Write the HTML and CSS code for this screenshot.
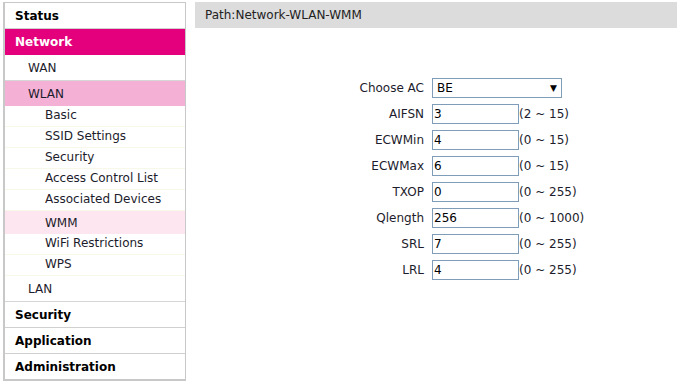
FILE: index.html
```html
<!DOCTYPE html>
<html>
<head>
<meta charset="utf-8">
<link rel="stylesheet" href="styles.css">
</head>
<body>
<div class="page">
  <nav class="menu">
    <div class="top">Status</div>
    <div class="top active">Network</div>
    <div class="mid">WAN</div>
    <div class="mid open">WLAN</div>
    <div class="sub">Basic</div>
    <div class="sub">SSID Settings</div>
    <div class="sub">Security</div>
    <div class="sub">Access Control List</div>
    <div class="sub">Associated Devices</div>
    <div class="sub current">WMM</div>
    <div class="sub">WiFi Restrictions</div>
    <div class="sub">WPS</div>
    <div class="mid last">LAN</div>
    <div class="top">Security</div>
    <div class="top">Application</div>
    <div class="top">Administration</div>
  </nav>
  <main class="content">
    <div class="path">Path:Network-WLAN-WMM</div>
    <form class="form">
      <label class="lbl">Choose AC</label>
      <div class="select"><span>BE</span><span class="arrow">&#9660;</span></div>
      <span></span>

      <label class="lbl">AIFSN</label>
      <input class="field" value="3">
      <span class="range">(2 ~ 15)</span>

      <label class="lbl">ECWMin</label>
      <input class="field" value="4">
      <span class="range">(0 ~ 15)</span>

      <label class="lbl">ECWMax</label>
      <input class="field" value="6">
      <span class="range">(0 ~ 15)</span>

      <label class="lbl">TXOP</label>
      <input class="field" value="0">
      <span class="range">(0 ~ 255)</span>

      <label class="lbl">Qlength</label>
      <input class="field" value="256">
      <span class="range">(0 ~ 1000)</span>

      <label class="lbl">SRL</label>
      <input class="field" value="7">
      <span class="range">(0 ~ 255)</span>

      <label class="lbl">LRL</label>
      <input class="field" value="4">
      <span class="range">(0 ~ 255)</span>
    </form>
  </main>
</div>
</body>
</html>
```
FILE: styles.css
```css
* { box-sizing: border-box; }
html, body { margin: 0; padding: 0; background: #fff; }
body {
  font-family: "DejaVu Sans", Verdana, sans-serif;
  font-size: 11px;
  color: #1c1c2c;
}
.page {
  display: flex;
  align-items: flex-start;
  padding: 2px 1px 0 3px;
  gap: 9px;
}
.menu {
  width: 183px;
  flex: none;
  border: 1px solid #c8c8c8;
  border-bottom: 2px solid #c8c8c8;
  border-left-width: 2px;
  display: flex;
  flex-direction: column;
}
.top {
  height: 26px;
  line-height: 25px;
  padding-top: 1px;
  padding-left: 10px;
  font-weight: bold;
  font-size: 12px;
  color: #000;
  border-bottom: 1px solid #d0d0d0;
}
.menu .top:last-child { border-bottom: none; height: 25px; line-height: 24px; }
.top.active {
  background: #e4007d;
  color: #fff;
  border-bottom: none;
  height: 26px;
}
.mid {
  height: 26px;
  line-height: 25px;
  padding-top: 1px;
  padding-left: 23px;
  font-size: 12px;
  border-bottom: 1px solid #d6d6d6;
}
.mid.open { background: #f5b0d5; border-bottom: none; height: 25px; line-height: 24px; }
.sub {
  height: 21px;
  line-height: 19px;
  padding-bottom: 1px;
  padding-left: 40px;
  font-size: 12px;
  border-bottom: 1px solid #f8f8ea;
}
.sub.current { background: #fde6f0; height: 23px; line-height: 24px; padding-bottom: 0; border-bottom: none; }
.content { flex: 1; }
.path {
  background: #dcdcdc;
  height: 26px;
  line-height: 26px;
  padding-left: 10px;
  font-size: 12px;
  color: #222;
}
.form {
  display: grid;
  grid-template-columns: 229px 87px auto;
  column-gap: 8px;
  row-gap: 6px;
  align-items: center;
  margin-top: 50px;
}
.lbl { text-align: right; font-size: 12px; }
.range { margin-left: -8px; font-size: 12px; }
.field {
  width: 87px;
  height: 20px;
  border: 1px solid #7f9db9;
  padding: 0 1px;
  font-family: inherit;
  font-size: 12px;
  color: #000;
  background: #fff;
}
.select {
  width: 130px;
  height: 20px;
  border: 1px solid #7f9db9;
  display: flex;
  justify-content: space-between;
  align-items: center;
  padding: 0 4px 0 4px;
  font-size: 12px;
  color: #000;
}
.arrow { font-size: 9px; }
```
